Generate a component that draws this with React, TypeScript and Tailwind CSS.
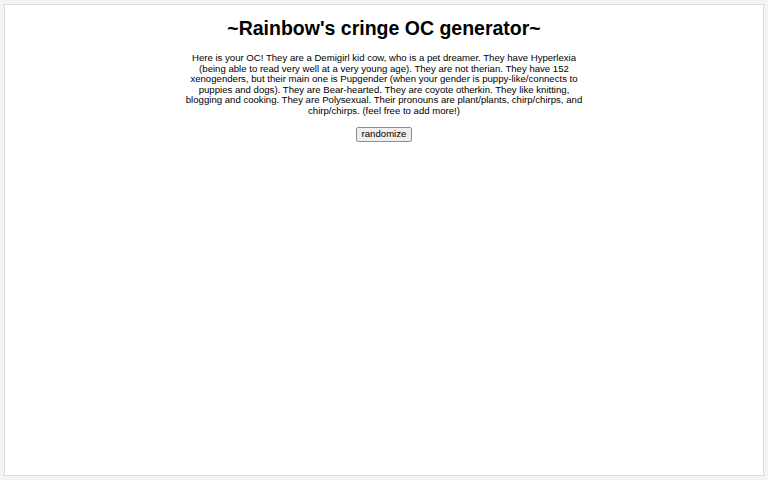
import React, { useState } from "react";

const text =
  "Here is your OC! They are a Demigirl kid cow, who is a pet dreamer. They have Hyperlexia (being able to read very well at a very young age). They are not therian. They have 152 xenogenders, but their main one is Pupgender (when your gender is puppy-like/connects to puppies and dogs). They are Bear-hearted. They are coyote otherkin. They like knitting, blogging and cooking. They are Polysexual. Their pronouns are plant/plants, chirp/chirps, and chirp/chirps. (feel free to add more!)";

export default function App() {
  const [oc] = useState(text);

  return (
    <div className="h-[480px] w-[768px] bg-[#f3f3f3] p-[4px] font-['Liberation_Sans',Arial,sans-serif] text-black">
      <div className="h-[472px] border border-[#dcdcdc] bg-white">
        <h1 className="mt-[11px] text-center text-[19.5px] font-bold leading-[24px]">
          ~Rainbow's cringe OC generator~
        </h1>
        <p className="mx-auto mt-[13px] w-[400px] text-center text-[9.6px] leading-[10.6px]">
          {oc}
        </p>
        <div className="mt-[10px] flex justify-center">
          <button className="h-[15px] rounded-[2px] border border-[#8f8f8f] bg-[#efefef] px-[4.5px] text-[9.6px] leading-[12px]">
            randomize
          </button>
        </div>
      </div>
    </div>
  );
}
